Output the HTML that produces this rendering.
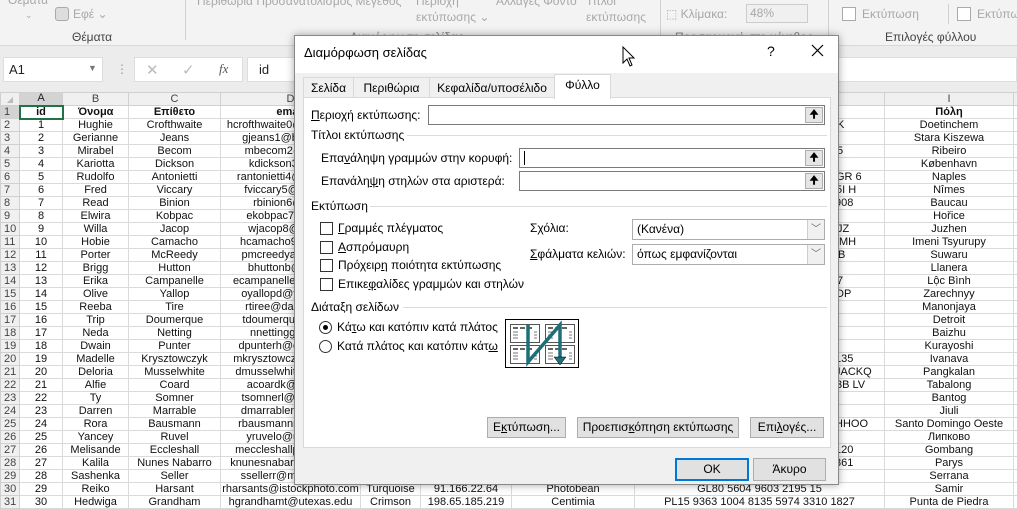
<!DOCTYPE html>
<html><head><meta charset="utf-8">
<style>
*{box-sizing:border-box;margin:0;padding:0}
body{width:1017px;height:506px;overflow:hidden;position:relative;background:#fff;font-family:"Liberation Sans","DejaVu Sans",sans-serif;color:#000}
.a{position:absolute;white-space:nowrap}
.rib{left:0;top:0;width:1017px;height:46px;background:#f3f3f3;border-bottom:1px solid #d8d8d8}
.g{color:#a8a8a8;font-size:12px}
.gl{color:#444;font-size:12px}
.band{left:0;top:46px;width:1017px;height:46px;background:#ececec}
table{position:absolute;left:0;top:92px;border-collapse:collapse;table-layout:fixed;font-size:11px;width:1023px}
td{height:13px;border:1px solid #dadada;text-align:center;white-space:nowrap;overflow:hidden;padding:0;line-height:11px;color:#111}
tr.h td{background:#f0f0f0;color:#444;border-color:#d0d0d0}
td.rh{background:#f0f0f0;color:#444;border-color:#d0d0d0;text-align:left;padding-left:3px}
td.l{text-align:left}
.dlg{left:294px;top:35px;width:545px;height:450px;background:#f0f0f0;border:1px solid #888;box-shadow:0 0 8px rgba(0,0,0,.35)}
.tb{left:0;top:0;width:543px;height:37px;background:#fff}
.f{font-size:12px}
.tab{top:41px;height:22px;border:1px solid #d9d9d9;border-bottom:none;background:#f0f0f0;font-size:12px;text-align:center;line-height:20px}
.panel{left:8px;top:61px;width:528px;height:351px;background:#fff;border:1px solid #d9d9d9}
.inp{background:#fff;border:1px solid #7a7a7a;height:20px}
.ub{position:absolute;right:1px;top:1px;width:18px;height:16px;border:1px solid #adadad;background:#e5e5e5;font-size:11px;text-align:center;line-height:14px;font-weight:bold}
.line{height:1px;background:#dcdcdc}
.cb{width:13px;height:13px;border:1px solid #333;background:#fff}
.sel{background:#fff;border:1px solid #adadad;height:21px;font-size:12px;line-height:19px;padding-left:4px}
.dd{position:absolute;right:0;top:0;width:17px;height:19px;border-left:1px solid #cdcdcd;background:#f0f0f0;color:#666;text-align:center;font-size:10px;line-height:19px}
.btn{height:21px;border:1px solid #adadad;background:#e1e1e1;font-size:12px;text-align:center;line-height:19px}
.rd{width:13px;height:13px;border:1px solid #333;border-radius:50%;background:#fff}
u{text-decoration:underline}
</style></head><body>

<div class="a rib"></div>
<div class="a g" style="left:8px;top:-7px">Θέματα</div>
<div class="a g" style="left:25px;top:10px;font-size:9px">⌄</div>
<div class="a" style="left:55px;top:7px;width:14px;height:14px;border:1px solid #aaa;border-radius:3px;background:#ddd"></div>
<div class="a g" style="left:73px;top:7px">Εφέ ⌄</div>
<div class="a gl" style="left:72px;top:30px">Θέματα</div>
<div class="a" style="left:185px;top:0;width:1px;height:40px;background:#d0d0d0"></div>
<div class="a g" style="left:197px;top:-6px">Περιθώρια Προσανατολισμός Μέγεθος</div>
<div class="a g" style="left:416px;top:-6px">Περιοχή</div>
<div class="a g" style="left:416px;top:10px">εκτύπωσης ⌄</div>
<div class="a g" style="left:496px;top:-6px">Αλλαγές Φόντο</div>
<div class="a g" style="left:586px;top:-6px">Τίτλοι</div>
<div class="a g" style="left:586px;top:10px">εκτύπωσης</div>
<div class="a gl" style="left:350px;top:30px;color:#888">Διαμόρφωση σελίδας</div>
<div class="a" style="left:660px;top:0;width:1px;height:40px;background:#d0d0d0"></div>
<div class="a g" style="left:666px;top:7px">⬚ Κλίμακα:</div>
<div class="a" style="left:746px;top:4px;width:62px;height:19px;border:1px solid #ccc;background:#f0f0f0"></div>
<div class="a g" style="left:750px;top:6px">48%</div>
<div class="a gl" style="left:675px;top:30px;color:#888">Προσαρμογή στο μέγεθος</div>
<div class="a" style="left:828px;top:0;width:1px;height:40px;background:#d0d0d0"></div>
<div class="a" style="left:842px;top:7px;width:14px;height:14px;border:1px solid #aaa;background:#fff"></div>
<div class="a g" style="left:862px;top:7px">Εκτύπωση</div>
<div class="a" style="left:948px;top:4px;width:1px;height:20px;background:#d0d0d0"></div>
<div class="a" style="left:957px;top:7px;width:14px;height:14px;border:1px solid #aaa;background:#fff"></div>
<div class="a g" style="left:977px;top:7px">Εκτύπω</div>
<div class="a gl" style="left:885px;top:30px">Επιλογές φύλλου</div>

<div class="a band"></div>
<div class="a" style="left:3px;top:57px;width:100px;height:25px;background:#fff;border:1px solid #ddd"></div>
<div class="a" style="left:9px;top:62px;font-size:13px;color:#222">A1</div>
<div class="a" style="left:88px;top:63px;font-size:9px;color:#777">▼</div>
<div class="a" style="left:116px;top:62px;font-size:12px;color:#999">⋮</div>
<div class="a" style="left:134px;top:57px;width:109px;height:25px;background:#fff;border:1px solid #ddd"></div>
<div class="a" style="left:146px;top:61px;font-size:15px;color:#bbb">✕</div>
<div class="a" style="left:182px;top:61px;font-size:15px;color:#bbb">✓</div>
<div class="a" style="left:219px;top:61px;font-size:13px;color:#555;font-style:italic;font-family:'Liberation Serif',serif">fx</div>
<div class="a" style="left:247px;top:57px;width:770px;height:25px;background:#fff;border:1px solid #ddd"></div>
<div class="a" style="left:259px;top:62px;font-size:13px;color:#222">id</div>

<table>
<colgroup><col style="width:19px"><col style="width:43px"><col style="width:66px"><col style="width:92px"><col style="width:140px"><col style="width:60px"><col style="width:91px"><col style="width:123px"><col style="width:250px"><col style="width:129px"><col style="width:10px"></colgroup>
<tr class="h"><td style="font-size:8px;color:#bbb">◢</td><td style="background:#d3d3d3;color:#222">A</td><td>B</td><td>C</td><td>D</td><td>E</td><td>F</td><td>G</td><td>H</td><td>I</td><td></td></tr>
<tr><td class="rh" style="background:#d3d3d3">1</td><td style="font-weight:bold;border:2px solid #217346">id</td><td style="font-weight:bold">Όνομα</td><td style="font-weight:bold">Επίθετο</td><td style="font-weight:bold">email</td><td></td><td></td><td></td><td></td><td style="font-weight:bold">Πόλη</td><td></td></tr>
<tr><td class="rh">2</td><td>1</td><td>Hughie</td><td>Crofthwaite</td><td>hcrofthwaite0@baidu.com</td><td></td><td></td><td></td><td class="l" style="padding-left:202px">K</td><td>Doetinchem</td><td></td></tr>
<tr><td class="rh">3</td><td>2</td><td>Gerianne</td><td>Jeans</td><td>gjeans1@bible.com</td><td></td><td></td><td></td><td></td><td>Stara Kiszewa</td><td></td></tr>
<tr><td class="rh">4</td><td>3</td><td>Mirabel</td><td>Becom</td><td>mbecom2@ca.gov</td><td></td><td></td><td></td><td class="l" style="padding-left:202px">5</td><td>Ribeiro</td><td></td></tr>
<tr><td class="rh">5</td><td>4</td><td>Kariotta</td><td>Dickson</td><td>kdickson3@is.gd</td><td></td><td></td><td></td><td></td><td>København</td><td></td></tr>
<tr><td class="rh">6</td><td>5</td><td>Rudolfo</td><td>Antonietti</td><td>rantonietti4@ibm.com</td><td></td><td></td><td></td><td class="l" style="padding-left:201px">GR 6</td><td>Naples</td><td></td></tr>
<tr><td class="rh">7</td><td>6</td><td>Fred</td><td>Viccary</td><td>fviccary5@wp.com</td><td></td><td></td><td></td><td class="l" style="padding-left:201px">5I H</td><td>Nîmes</td><td></td></tr>
<tr><td class="rh">8</td><td>7</td><td>Read</td><td>Binion</td><td>rbinion6@ow.ly</td><td></td><td></td><td></td><td class="l" style="padding-left:200px">908</td><td>Baucau</td><td></td></tr>
<tr><td class="rh">9</td><td>8</td><td>Elwira</td><td>Kobpac</td><td>ekobpac7@si.edu</td><td></td><td></td><td></td><td></td><td>Hořice</td><td></td></tr>
<tr><td class="rh">10</td><td>9</td><td>Willa</td><td>Jacop</td><td>wjacop8@ed.gov</td><td></td><td></td><td></td><td class="l" style="padding-left:202px">JZ</td><td>Juzhen</td><td></td></tr>
<tr><td class="rh">11</td><td>10</td><td>Hobie</td><td>Camacho</td><td>hcamacho9@mail.ru</td><td></td><td></td><td></td><td class="l" style="padding-left:204px">MH</td><td>Imeni Tsyurupy</td><td></td></tr>
<tr><td class="rh">12</td><td>11</td><td>Porter</td><td>McReedy</td><td>pmcreedya@va.gov</td><td></td><td></td><td></td><td class="l" style="padding-left:203px">B</td><td>Suwaru</td><td></td></tr>
<tr><td class="rh">13</td><td>12</td><td>Brigg</td><td>Hutton</td><td>bhuttonb@un.org</td><td></td><td></td><td></td><td></td><td>Llanera</td><td></td></tr>
<tr><td class="rh">14</td><td>13</td><td>Erika</td><td>Campanelle</td><td>ecampanellec@hp.com</td><td></td><td></td><td></td><td class="l" style="padding-left:202px">7</td><td>Lộc Bình</td><td></td></tr>
<tr><td class="rh">15</td><td>14</td><td>Olive</td><td>Yallop</td><td>oyallopd@yello.com</td><td></td><td></td><td></td><td class="l" style="padding-left:201px">DP</td><td>Zarechnyy</td><td></td></tr>
<tr><td class="rh">16</td><td>15</td><td>Reeba</td><td>Tire</td><td>rtiree@dagon.com</td><td></td><td></td><td></td><td></td><td>Manonjaya</td><td></td></tr>
<tr><td class="rh">17</td><td>16</td><td>Trip</td><td>Doumerque</td><td>tdoumerquef@is.gd</td><td></td><td></td><td></td><td></td><td>Detroit</td><td></td></tr>
<tr><td class="rh">18</td><td>17</td><td>Neda</td><td>Netting</td><td>nnettingg@ow.ly</td><td></td><td></td><td></td><td></td><td>Baizhu</td><td></td></tr>
<tr><td class="rh">19</td><td>18</td><td>Dwain</td><td>Punter</td><td>dpunterh@cocolog.jp</td><td></td><td></td><td></td><td></td><td>Kurayoshi</td><td></td></tr>
<tr><td class="rh">20</td><td>19</td><td>Madelle</td><td>Krysztowczyk</td><td>mkrysztowczyki@de.vu</td><td></td><td></td><td></td><td class="l" style="padding-left:200px">135</td><td>Ivanava</td><td></td></tr>
<tr><td class="rh">21</td><td>20</td><td>Deloria</td><td>Musselwhite</td><td>dmusselwhitej@a.com</td><td></td><td></td><td></td><td class="l" style="padding-left:200px">JACKQ</td><td>Pangkalan</td><td></td></tr>
<tr><td class="rh">22</td><td>21</td><td>Alfie</td><td>Coard</td><td>acoardk@wiki.org</td><td></td><td></td><td></td><td class="l" style="padding-left:201px">3B LV</td><td>Tabalong</td><td></td></tr>
<tr><td class="rh">23</td><td>22</td><td>Ty</td><td>Somner</td><td>tsomnerl@bing.com</td><td></td><td></td><td></td><td></td><td>Bantog</td><td></td></tr>
<tr><td class="rh">24</td><td>23</td><td>Darren</td><td>Marrable</td><td>dmarrablem@si.edu</td><td></td><td></td><td></td><td></td><td>Jiuli</td><td></td></tr>
<tr><td class="rh">25</td><td>24</td><td>Rora</td><td>Bausmann</td><td>rbausmannn@va.gov</td><td></td><td></td><td></td><td class="l" style="padding-left:200px">HHOO</td><td>Santo Domingo Oeste</td><td></td></tr>
<tr><td class="rh">26</td><td>25</td><td>Yancey</td><td>Ruvel</td><td>yruvelo@ucla.edu</td><td></td><td></td><td></td><td></td><td>Липково</td><td></td></tr>
<tr><td class="rh">27</td><td>26</td><td>Melisande</td><td>Eccleshall</td><td>meccleshallp@hp.com</td><td></td><td></td><td></td><td class="l" style="padding-left:200px">120</td><td>Gombang</td><td></td></tr>
<tr><td class="rh">28</td><td>27</td><td>Kalila</td><td>Nunes Nabarro</td><td>knunesnabarroq@a.com</td><td></td><td></td><td></td><td class="l" style="padding-left:200px">861</td><td>Parys</td><td></td></tr>
<tr><td class="rh">29</td><td>28</td><td>Sashenka</td><td>Seller</td><td>ssellerr@mozilla.org</td><td></td><td></td><td></td><td></td><td>Serrana</td><td></td></tr>
<tr><td class="rh">30</td><td>29</td><td>Reiko</td><td>Harsant</td><td>rharsants@istockphoto.com</td><td>Turquoise</td><td>91.166.22.64</td><td>Photobean</td><td>GL80 5604 9603 2195 15</td><td>Samir</td><td></td></tr>
<tr><td class="rh">31</td><td>30</td><td>Hedwiga</td><td>Grandham</td><td>hgrandhamt@utexas.edu</td><td>Crimson</td><td>198.65.185.219</td><td>Centimia</td><td>PL15 9363 1004 8135 5974 3310 1827</td><td>Punta de Piedra</td><td></td></tr>
</table>

<div class="a dlg">
 <div class="a tb"></div>
 <div class="a f" style="left:9px;top:9px;font-size:13px">Διαμόρφωση σελίδας</div>
 <div class="a" style="left:472px;top:7px;font-size:14px">?</div>
 <svg class="a" style="left:516px;top:8px" width="13" height="13" viewBox="0 0 13 13"><path d="M1 1L12 12M12 1L1 12" stroke="#000" stroke-width="1.2"/></svg>
 <div class="a tab" style="left:8px;width:51px">Σελίδα</div>
 <div class="a tab" style="left:58px;width:77px">Περιθώρια</div>
 <div class="a tab" style="left:134px;width:126px">Κεφαλίδα/υποσέλιδο</div>
 <div class="a panel"></div>
 <div class="a tab" style="left:259px;top:38px;width:57px;height:25px;background:#fff;z-index:2">Φύλλο</div>

 <div class="a f" style="left:16px;top:72px"><u>Π</u>εριοχή εκτύπωσης:</div>
 <div class="a inp" style="left:133px;top:69px;width:397px"><div class="ub">🠉</div></div>
 <div class="a f" style="left:16px;top:92px">Τίτλοι εκτύπωσης</div>
 <div class="a line" style="left:112px;top:99px;width:420px"></div>
 <div class="a f" style="left:26px;top:115px">Επα<u>ν</u>άληψη γραμμών στην κορυφή:</div>
 <div class="a inp" style="left:224px;top:112px;width:306px"><div class="ub">🠉</div><div class="a" style="left:4px;top:2px;width:1px;height:14px;background:#000"></div></div>
 <div class="a f" style="left:26px;top:138px">Επανάλη<u>ψ</u>η στηλών στα αριστερά:</div>
 <div class="a inp" style="left:224px;top:135px;width:306px"><div class="ub">🠉</div></div>

 <div class="a f" style="left:16px;top:163px">Εκτύπωση</div>
 <div class="a line" style="left:75px;top:170px;width:457px"></div>
 <div class="a cb" style="left:25px;top:186px"></div><div class="a f" style="left:43px;top:185px"><u>Γ</u>ραμμές πλέγματος</div>
 <div class="a cb" style="left:25px;top:205px"></div><div class="a f" style="left:43px;top:204px"><u>Α</u>σπρόμαυρη</div>
 <div class="a cb" style="left:25px;top:223px"></div><div class="a f" style="left:43px;top:222px">Πρόχειρ<u>η</u> ποιότητα εκτύπωσης</div>
 <div class="a cb" style="left:25px;top:242px"></div><div class="a f" style="left:43px;top:241px">Επικε<u>φ</u>αλίδες γραμμών και στηλών</div>
 <div class="a f" style="left:235px;top:185px">Σ<u>χ</u>όλια:</div>
 <div class="a sel" style="left:337px;top:183px;width:193px">(Κανένα)<div class="dd">﹀</div></div>
 <div class="a f" style="left:235px;top:211px"><u>Σ</u>φάλματα κελιών:</div>
 <div class="a sel" style="left:337px;top:208px;width:193px">όπως εμφανίζονται<div class="dd">﹀</div></div>

 <div class="a f" style="left:16px;top:264px">Διάταξη σελίδων</div>
 <div class="a line" style="left:108px;top:271px;width:424px"></div>
 <div class="a rd" style="left:24px;top:285px"><div class="a" style="left:3px;top:3px;width:5px;height:5px;border-radius:50%;background:#000"></div></div>
 <div class="a f" style="left:42px;top:284px">Κά<u>τ</u>ω και κατόπιν κατά πλάτος</div>
 <div class="a rd" style="left:24px;top:304px"></div>
 <div class="a f" style="left:42px;top:303px">Κατά πλάτος και κατόπιν κάτ<u>ω</u></div>
 <svg class="a" style="left:210px;top:283px" width="75" height="50" viewBox="0 0 75 50">
  <rect x="0.5" y="0.5" width="73" height="48" fill="#fff" stroke="#000"/>
  <g fill="none" stroke="#555" stroke-width="1">
   <rect x="5.5" y="5.5" width="29" height="18"/><rect x="40.5" y="5.5" width="29" height="18"/>
   <rect x="5.5" y="26.5" width="29" height="18"/><rect x="40.5" y="26.5" width="29" height="18"/>
  </g>
  <g stroke="#333" stroke-width="1.5">
   <path d="M8 9h5M15 9h5M22 9h5M43 9h5M50 9h5M57 9h5M8 30h5M15 30h5M22 30h5M43 30h5M50 30h5M57 30h5"/>
  </g>
  <g stroke="#777" stroke-width="1">
   <path d="M8 13h5M8 16h5M8 19h5M29 13h3M29 16h3M29 19h3M43 13h5M43 16h5M43 19h5M64 13h3M64 16h3M64 19h3M8 34h5M8 37h5M8 40h5M29 34h3M29 37h3M29 40h3M43 34h5M43 37h5M43 40h5M64 34h3M64 37h3M64 40h3"/>
  </g>
  <path d="M23 6V43L55 6V40" fill="none" stroke="#1d6f78" stroke-width="3.5"/>
  <path d="M49 38L55 46L61 38Z" fill="#1d6f78" stroke="#000" stroke-width="0.5"/>
 </svg>

 <div class="a btn" style="left:192px;top:381px;width:79px">Ε<u>κ</u>τύπωση...</div>
 <div class="a btn" style="left:282px;top:381px;width:162px">Προεπισ<u>κ</u>όπηση εκτύπωσης</div>
 <div class="a btn" style="left:455px;top:381px;width:74px">Επι<u>λ</u>ογές...</div>
 <div class="a btn" style="left:380px;top:422px;width:74px;height:23px;border:2px solid #0078d7;line-height:19px">OK</div>
 <div class="a btn" style="left:458px;top:422px;width:73px;height:23px;line-height:21px">Άκυρο</div>
</div>

<svg class="a" style="left:622px;top:46px" width="14" height="22" viewBox="0 0 14 22">
 <path d="M1 1V17L5 13L8 20L10 19L7 12H12Z" fill="#fff" stroke="#000" stroke-width="1"/>
</svg>
</body></html>
